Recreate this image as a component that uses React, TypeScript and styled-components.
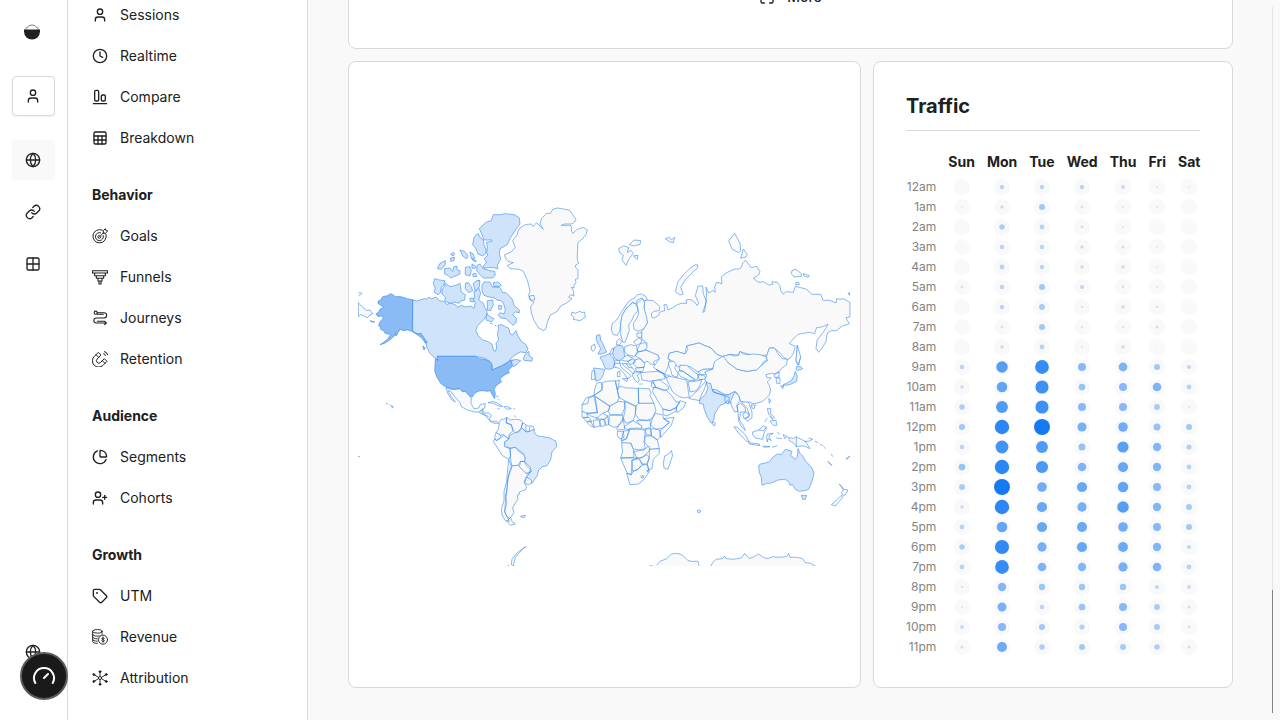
import React from 'react';
import styled, { createGlobalStyle } from 'styled-components';
import {
  User,
  Clock,
  AlignEndHorizontal,
  Sheet,
  Globe,
  Link as LinkIcon,
  Grid2X2,
  ChartPie,
  UserPlus,
  Tag,
  Maximize,
} from 'lucide-react';

const GlobalStyle = createGlobalStyle`
  * { box-sizing: border-box; }
  body {
    margin: 0;
    background: #f9f9f9;
    color: #202020;
    font-family: Inter, "Liberation Sans", sans-serif;
    font-size: 14px;
    line-height: 20px;
  }
`;

const Shell = styled.div`
  display: flex;
  height: 100vh;
  overflow: hidden;
`;

const Rail = styled.aside`
  display: flex;
  flex: none;
  flex-direction: column;
  width: 68px;
  padding: 20px 12px 48px;
  border-right: 1px solid #d9d9d9;
  background: #fff;
`;

const Logo = styled.a`
  display: flex;
  justify-content: center;
  align-items: center;
  height: 24px;
  margin-bottom: 32px;
  padding-right: 3px;
`;

const RailNav = styled.nav`
  display: flex;
  flex-direction: column;
  gap: 12px;
  margin-top: 24px;
`;

const RailButton = styled.button<{ $look?: 'outlined' | 'active' }>`
  display: flex;
  align-items: center;
  justify-content: center;
  width: 100%;
  height: 40px;
  padding: 0 1px 0 0;
  color: inherit;
  background: ${(p) => (p.$look === 'active' ? '#f9f9f9' : '#fff')};
  border: 1px solid ${(p) => (p.$look === 'outlined' ? '#d9d9d9' : 'transparent')};
  border-radius: ${(p) => (p.$look === 'outlined' ? '4px' : '0')};
  box-shadow: ${(p) => (p.$look === 'outlined' ? '0 1px 2px rgba(0, 0, 0, 0.06)' : 'none')};
`;

const RailFooter = styled.div`
  margin-top: auto;
`;

const Sidebar = styled.nav`
  display: flex;
  flex: none;
  flex-direction: column;
  gap: 36px;
  width: 240px;
  padding: 4px 24px;
  overflow: hidden;
  border-right: 1px solid #d9d9d9;
  background: #fff;
`;

const NavGroup = styled.section`
  display: flex;
  flex-direction: column;
  gap: 20px;
`;

const NavHeading = styled.h2`
  margin: 0;
  font-size: 14px;
  font-weight: 700;
  line-height: 21px;
`;

const NavLink = styled.a`
  display: flex;
  align-items: center;
  gap: 12px;
  color: inherit;
  line-height: 21px;
  text-decoration: none;
`;

const Main = styled.main`
  display: flex;
  flex: 1;
  flex-direction: column;
  justify-content: flex-end;
  gap: 12px;
  min-width: 0;
  padding: 0 39px 32px 40px;
`;

const ScrollTrack = styled.div`
  display: flex;
  flex: none;
  flex-direction: column;
  justify-content: flex-end;
  width: 8px;
  padding: 7px 7px 7px 0;
`;

const ScrollLine = styled.div`
  display: flex;
  flex: 1;
  align-items: flex-end;
  background: #e4e4e4;
`;

const ScrollThumb = styled.div`
  width: 1px;
  height: 123px;
  background: #838383;
`;

const Card = styled.section`
  flex: none;
  padding: 32px;
  border: 1px solid #d9d9d9;
  border-radius: 8px;
  background: #fff;
`;

const MoreCard = styled(Card)`
  display: flex;
  justify-content: center;
  padding-bottom: 41px;
`;

const MoreButton = styled.button`
  display: flex;
  align-items: center;
  gap: 12px;
  padding: 0;
  border: 0;
  color: inherit;
  background: none;
  font: inherit;
  font-weight: 500;
`;

const Columns = styled.div`
  display: flex;
  gap: 12px;
`;

const MapCard = styled(Card)`
  display: flex;
  flex: 1;
  align-items: center;
  min-width: 0;
  padding: 0;
`;

const TrafficCard = styled(Card)`
  width: 360px;
  padding-bottom: 28px;
`;

const CardTitle = styled.h2`
  margin: 0 0 21px;
  padding-bottom: 12px;
  border-bottom: 1px solid #d9d9d9;
  font-size: 20px;
  font-weight: 700;
  line-height: 24px;
`;

const Heatmap = styled.table`
  width: 100%;
  border-collapse: collapse;
`;

const DayHead = styled.th`
  padding: 0 0 7px 12px;
  font-size: 14px;
  font-weight: 700;
  line-height: 20px;
  text-align: center;
`;

const HourHead = styled.th`
  padding: 0 0 4px;
  color: #838383;
  font-size: 12px;
  font-weight: 400;
  line-height: 16px;
  text-align: right;
`;

const Cell = styled.td`
  padding: 0 0 4px 12px;
`;

const Bubble = styled.div`
  display: flex;
  align-items: center;
  justify-content: center;
  width: 16px;
  height: 16px;
  margin: 0 auto;
  border-radius: 50%;
  background: #f9f9f9;
`;

const Dot = styled.div`
  width: 16px;
  height: 16px;
  border-radius: 50%;
  background: #147af3;
`;

const SpeedButton = styled.button`
  position: fixed;
  bottom: 20px;
  left: 20px;
  display: flex;
  align-items: center;
  justify-content: center;
  width: 48px;
  height: 48px;
  padding: 0;
  border: 2px solid #5c5c5c;
  border-radius: 50%;
  color: #fff;
  background: #1a1a1a;
`;

const MapSvg = styled.svg`
  display: block;
  width: 100%;
  height: auto;
`;

type GlyphProps = { children: React.ReactNode; width?: number };

const Glyph = ({ children, width = 1.3 }: GlyphProps) => (
  <svg
    width="16"
    height="16"
    viewBox="0 0 24 24"
    fill="none"
    stroke="currentColor"
    strokeWidth={width}
    strokeLinecap="round"
    strokeLinejoin="round"
    aria-hidden="true"
  >
    {children}
  </svg>
);

const GoalIcon = () => (
  <Glyph width={1.5}>
    <path d="M15.500 3.200A10 10 0 1 0 21 9.500" />
    <path d="M13 7.200A6 6 0 1 0 17 11.500" />
    <path d="M11 10.800a2.300 2.300 0 1 0 2.500 2.400" />
    <path d="M11 13.500l7-7M17 7.500V4l3-3 .8 2.700L23.500 4.500l-3 3Z" />
  </Glyph>
);

const FunnelIcon = () => (
  <Glyph width={1.6}>
    <path d="M.8 2.500h22.400v3.500H.8ZM4 6v4h16V6M6.500 10v4h11v-4M9 14v4h6v-4M10.500 18v4.500h3V18" />
  </Glyph>
);

const JourneyIcon = () => (
  <Glyph width={1.6}>
    <circle cx="5.500" cy="4" r="2.300" />
    <path d="M8 4h10a4 4 0 0 1 0 8H6.500a3.700 3.700 0 0 0 0 7.500H21M19 17l2.500 2.500L19 22M8 6.500h9M8 17h11" />
  </Glyph>
);

const MagnetIcon = () => (
  <Glyph width={1.5}>
    <path d="M9 2.500 3.500 8A9.300 9.300 0 0 0 16.500 21.500l6-6-4-4-5.700 5.700A3.500 3.500 0 0 1 7.800 12L13 6.500ZM6 5.500l4 4M15.500 14.500l4 4" />
    <path d="M18.500.8a6 6 0 0 1 5 5M17.500 4a3 3 0 0 1 2.700 2.700" />
  </Glyph>
);

const RevenueIcon = () => (
  <Glyph width={1.4}>
    <ellipse cx="8" cy="3.500" rx="7" ry="2.700" />
    <path d="M1 3.500V19c0 1.500 3.200 2.600 7 2.600M15 3.500v4M1 8c0 1.500 3 2.700 7 2.700l3-.3M1 12c0 1.500 3 2.700 7 2.700M1 16c0 1.300 3 2.300 7 2.300" />
    <circle cx="16.500" cy="16" r="6.800" />
    <path d="M18.500 14c-.4-1-3.600-1.200-3.800.3-.2 1.800 3.800 1.400 3.800 3.300 0 1.600-3.500 1.500-4 .2M16.500 12v8" />
  </Glyph>
);

const AttributionIcon = () => (
  <Glyph width={1.4}>
    <circle cx="12" cy="12" r="2.300" />
    <path d="M12 9.500V4M12 14.500V20M9.800 11 4 7.500M14.200 11 20 7.500M9.800 13 4 16.500M14.200 13l5.800 3.500" />
    <g fill="currentColor">
      <circle cx="12" cy="2.500" r="1.400" />
      <circle cx="12" cy="21.500" r="1.400" />
      <circle cx="2.700" cy="6.800" r="1.400" />
      <circle cx="21.300" cy="6.800" r="1.400" />
      <circle cx="2.700" cy="17.200" r="1.400" />
      <circle cx="21.300" cy="17.200" r="1.400" />
    </g>
  </Glyph>
);

type NavItem = { label: string; icon: React.ReactNode };
type NavSection = { title?: string; items: NavItem[] };

const sections: NavSection[] = [
  {
    items: [
      { label: 'Sessions', icon: <User size={16} /> },
      { label: 'Realtime', icon: <Clock size={16} /> },
      { label: 'Compare', icon: <AlignEndHorizontal size={16} /> },
      { label: 'Breakdown', icon: <Sheet size={16} /> },
    ],
  },
  {
    title: 'Behavior',
    items: [
      { label: 'Goals', icon: <GoalIcon /> },
      { label: 'Funnels', icon: <FunnelIcon /> },
      { label: 'Journeys', icon: <JourneyIcon /> },
      { label: 'Retention', icon: <MagnetIcon /> },
    ],
  },
  {
    title: 'Audience',
    items: [
      { label: 'Segments', icon: <ChartPie size={16} /> },
      { label: 'Cohorts', icon: <UserPlus size={16} /> },
    ],
  },
  {
    title: 'Growth',
    items: [
      { label: 'UTM', icon: <Tag size={16} /> },
      { label: 'Revenue', icon: <RevenueIcon /> },
      { label: 'Attribution', icon: <AttributionIcon /> },
    ],
  },
];

const days = ['Sun', 'Mon', 'Tue', 'Wed', 'Thu', 'Fri', 'Sat'];

// Share of the busiest hour, in percent, Sunday to Saturday.
const traffic: [string, number[]][] = [
  ['12am', [8, 28, 28, 28, 24, 14, 12]],
  ['1am', [12, 22, 38, 18, 14, 14, 8]],
  ['2am', [0, 34, 30, 18, 14, 6, 0]],
  ['3am', [8, 28, 28, 22, 20, 12, 8]],
  ['4am', [8, 30, 28, 22, 22, 12, 0]],
  ['5am', [18, 28, 38, 26, 18, 14, 0]],
  ['6am', [8, 28, 36, 16, 22, 16, 0]],
  ['7am', [0, 18, 38, 16, 16, 20, 8]],
  ['8am', [4, 22, 30, 14, 22, 10, 8]],
  ['9am', [28, 72, 86, 50, 55, 38, 26]],
  ['10am', [22, 66, 82, 42, 50, 54, 30]],
  ['11am', [34, 74, 82, 50, 50, 36, 14]],
  ['12pm', [38, 90, 100, 57, 60, 44, 38]],
  ['1pm', [28, 80, 74, 44, 70, 52, 32]],
  ['2pm', [42, 90, 76, 54, 64, 52, 30]],
  ['3pm', [36, 100, 60, 64, 66, 50, 30]],
  ['4pm', [22, 90, 64, 58, 72, 52, 37]],
  ['5pm', [30, 66, 64, 63, 60, 50, 38]],
  ['6pm', [34, 88, 58, 64, 62, 52, 26]],
  ['7pm', [30, 86, 54, 52, 58, 54, 30]],
  ['8pm', [16, 52, 40, 40, 40, 26, 24]],
  ['9pm', [14, 56, 28, 42, 50, 36, 20]],
  ['10pm', [24, 50, 38, 32, 50, 37, 18]],
  ['11pm', [20, 62, 34, 38, 37, 34, 20]],
];

const tones = {
  none: '#f9f9f9',
  faint: '#dce9fb',
  low: '#d4e6fb',
  mid: '#cfe3fb',
  high: '#8bbbf5',
  sea: '#ffffff',
};

type Region = { x: number; y: number; shapes: [keyof typeof tones, string][] };

const regions: Region[] = [
  // North America
  {
    x: 0,
    y: 0,
    shapes: [
      ['mid', 'M188 299 200 303 210 300 222 296 230 297 238 291 244 297 256 292 262 294 268 302 280 304 292 314 300 308 316 314 322 322 334 316 345 321 362 318 372 325 376 308 370 300 374 290 372 276 380 262 378 246 388 240 386 262 392 280 386 300 400 310 404 322 410 330 412 344 400 360 382 378 378 392 384 406 398 420 412 424 426 432 430 450 436 454 440 444 438 430 446 420 442 402 446 386 444 376 456 374 466 380 476 384 480 400 488 405 498 392 504 408 514 424 528 434 534 446 528 458 512 456 500 462 488 470 478 482 490 480 484 490 470 488 456 498 440 504 428 512 424 488 414 480 400 474 376 469 262 469 262 480 250 470 240 460 232 446 228 432 216 412 204 402 188 394Z'],
      ['high', 'M122 281 112 287 98 290 92 300 84 304 84 310 95 318 101 323 90 327 88 334 78 342 84 350 92 348 100 352 97 358 88 368 86 378 92 380 92 388 101 392 104 398 110 402 118 402 122 404 112 418 102 426 90 434 104 430 122 418 133 408 134 400 140 398 146 396 150 388 160 392 172 390 187 394 200 402 213 400 221 412 232 428 226 428 216 414 204 406 187 394 188 299 172 296 160 292 146 289 138 291 130 285Z'],
      ['high', 'M256 476 264 482 262 469 376 469 388 476 404 478 418 484 426 494 426 510 446 502 458 496 470 490 478 482 488 490 486 500 474 512 478 518 462 526 450 536 454 546 440 556 432 568 436 580 434 596 424 580 422 572 412 574 396 572 384 574 374 580 366 592 356 586 346 574 338 576 328 566 308 568 286 560 272 550 260 530 254 512Z'],
      ['mid', 'M484 482 498 478 512 482 500 494 490 500 486 492ZM520 478 524 466 536 454 538 468 548 474 545 484 534 482 522 481Z'],
      ['mid', 'M466 41 448 44 430 44 424 62 410 66 398 76 388 86 396 104 402 120 426 120 424 125 410 126 412 142 410 158 414 166 402 176 410 186 400 198 402 205 420 202 434 204 444 206 442 196 452 178 448 160 450 146 472 134 482 112 496 92 502 82 510 72 508 54 494 44Z'],
      ['mid', 'M384 100 372 112 368 134 378 146 384 162 398 168 408 160 408 148 402 134 400 120 390 112Z'],
      ['mid', 'M381 196 390 192 400 206 420 212 434 214 436 226 428 234 400 234 388 222 380 212ZM330 150 344 154 354 168 350 176 338 168ZM360 156 370 162 374 176 364 176ZM366 178 380 182 376 186ZM366 192 378 200 374 206 366 204ZM368 222 378 220 380 230 370 230ZM346 202 360 200 364 212 360 228 346 224ZM306 158 314 160 310 168 302 164ZM302 174 314 172 312 182 302 184ZM262 206 270 190 286 182 286 194 274 208ZM284 206 300 204 308 214 312 200 320 198 322 210 330 212 330 222 312 230 302 234 294 226 284 222Z'],
      ['mid', 'M254 236 268 240 284 242 282 256 274 262 272 278 264 284 252 276 256 264 250 252ZM286 250 300 260 318 256 330 250 334 276 346 284 344 300 330 304 328 310 312 306 302 310 284 304 286 292 276 282 276 268 284 260ZM346 250 356 248 364 260 368 272 356 278 346 266ZM370 250 380 242 390 242 388 260 378 274 372 262ZM360 294 372 296 370 306 360 304Z'],
      ['mid', 'M396 256 402 246 420 246 428 262 444 258 452 266 458 278 468 278 480 290 488 300 492 316 508 330 508 338 496 336 488 344 500 356 498 368 490 376 478 366 468 356 452 354 444 346 450 338 462 342 466 330 460 308 452 302 440 300 434 294 414 290 402 286 396 272ZM430 248 444 246 454 256 444 262 432 260ZM412 302 428 300 430 314 422 332 412 330ZM410 342 420 350 432 356 424 366 408 360ZM446 316 456 318 454 328 446 328ZM420 370 428 372M436 374 438 380'],
      ['none', 'M25 308 34 318 50 332 60 330 68 342 58 346 52 354 38 346 30 344 25 350ZM26 277 36 280 30 286 26 284'],
      ['high', 'M60 362 74 366 64 365ZM136 402 144 400 138 408ZM218 438 226 444 222 450Z'],
    ],
  },
  // Greenland and Iceland
  {
    x: 360,
    y: 0,
    shapes: [
      ['none', 'M248 28 262 24 280 27 298 30 308 44 318 58 314 66 306 72 284 72 274 76 302 76 306 84 304 90 308 100 322 88 340 82 352 90 348 104 334 120 324 128 322 160 322 180 326 190 316 196 318 204 324 210 324 236 316 238 318 248 312 256 312 264 304 262 310 272 312 288 302 284 296 292 306 296 292 308 272 318 262 334 240 346 232 368 228 386 220 392 206 384 192 362 184 338 182 320 192 306 180 300 176 286 180 272 172 240 160 214 148 208 120 206 112 196 130 188 114 184 106 174 104 164 124 156 136 142 128 122 142 104 144 94 150 84 166 74 184 72 190 80 194 74 200 68 220 88 210 72 214 56 230 40 242 40ZM178 288 192 286 194 300 182 300Z'],
      ['none', 'M306 336 304 346 312 352 310 358 330 362 346 352 344 336 336 338 330 334 316 340Z'],
    ],
  },
  // Russia and the arctic islands
  {
    x: 0,
    y: 0,
    shapes: [
      ['none', 'M886 300 910 302 930 320 928 332 912 334 904 340 906 352 912 354 926 346 930 336 944 332 942 314 950 314 954 330 970 322 982 314 994 310 1010 310 1008 300 1020 298 1034 306 1042 317 1046 309 1036 287 1044 259 1058 257 1060 281 1070 305 1058 337 1064 335 1070 281 1068 261 1076 279 1090 271 1096 277 1094 261 1100 247 1116 251 1114 231 1128 219 1154 207 1166 207 1174 203 1178 189 1188 181 1198 195 1204 203 1220 199 1230 215 1226 225 1210 235 1226 247 1240 245 1256 255 1268 253 1266 245 1282 247 1290 257 1292 271 1300 283 1308 275 1330 277 1336 259 1368 267 1386 283 1412 283 1420 301 1440 301 1458 309 1460 297 1482 297 1500 307 1500 351 1488 353 1498 371 1476 379 1458 393 1446 391 1432 399 1428 425 1416 445 1406 457 1398 445 1402 419 1420 397 1434 373 1416 381 1400 383 1394 401 1378 397 1344 403 1330 417 1318 431 1336 439 1330 461 1320 475 1312 479 1300 471 1282 451 1268 443 1258 445 1252 465 1230 467 1204 465 1170 455 1164 465 1138 463 1120 471 1100 463 1082 443 1064 437 1048 429 1010 438 1005 462 980 454 958 460 954 476 960 480 956 492 952 506 944 522 918 508 910 502 928 476 924 466 900 456 886 448 892 430 876 418 874 394 882 386 892 368 882 330 884 306Z'],
      ['none', 'M1044 195 1036 194 1020 205 1000 225 984 245 976 275 990 285 1000 282 992 262 1006 240 1030 215 1042 205ZM806 146 820 138 836 142 832 158 842 150 850 160 838 176 828 196 816 180 820 166 810 160ZM838 134 852 120 872 122 870 134 850 138ZM850 168 864 166 862 178ZM946 116 958 112 964 120 974 112 970 128 960 126Z'],
      ['none', 'M954 476 958 460 980 454 1005 462 1014 448 1010 438 1048 429 1064 437 1082 443 1100 463 1120 471 1112 490 1094 492 1088 506 1060 508 1044 516 1020 500 992 496 984 502 976 492 968 484Z'],
      ['none', 'M990 496 1010 496 1030 514 1048 526 1040 540 1022 530 1000 514 988 512ZM988 512 1000 514 1022 530 1036 542 1014 540 990 528 984 518ZM1044 516 1060 508 1088 508 1078 522 1054 526ZM1042 524 1060 524 1070 536 1048 540ZM946 528 964 530 982 534 1010 540 1014 566 1018 592 1000 594 984 588 968 576 958 556ZM1014 544 1036 544 1056 538 1050 556 1040 572 1020 576ZM1018 594 1042 572 1056 556 1072 540 1064 566 1050 594 1050 602 1018 596Z'],
      ['sea', 'M956 486 972 484 978 494 974 504 984 520 982 532 966 526 962 508 956 496Z'],
    ],
  },
  {
    x: 1020,
    y: 75,
    shapes: [
      ['none', 'M134 25 116 48 126 72 146 83 152 76 150 54ZM160 72 172 88 168 96 152 100ZM306 136 318 133 334 146 334 154 312 156 304 146ZM340 146 358 152 354 157 342 153ZM318 172 326 172 328 179 316 179ZM474 206 479 202 478 211ZM322 362 326 390 332 396 326 420 318 410Z'],
    ],
  },
  // Europe
  {
    x: 660,
    y: 240,
    shapes: [
      ['none', 'M126 132 140 120 152 100 166 78 178 62 196 52 202 44 214 42 226 48 232 58 224 62 214 54 202 60 198 72 188 66 178 78 168 86 156 108 152 132 150 150 142 166 130 164 124 150Z'],
      ['none', 'M188 68 200 74 204 92 192 106 186 120 176 134 178 152 170 174 164 188 158 186 152 164 152 132 156 108 168 86ZM200 72 216 56 224 66 222 84 230 112 232 128 222 146 204 154 192 148 190 130 200 116 206 100 204 86Z'],
      ['mid', 'M80 166 90 164 92 180 98 190 104 204 110 216 96 222 84 222 92 206 84 192 78 178Z'],
      ['none', 'M64 198 74 192 76 206 70 214 64 210ZM66 272 74 272 76 298 64 298ZM140 184 148 176 156 184 148 196 140 194ZM118 222 128 204 132 206 130 222ZM164 200 182 194 200 198 202 216 194 230 172 224 164 216ZM200 160 216 158 214 174 202 170ZM190 186 206 174 216 180 212 190 200 196ZM202 208 212 190 226 188 232 200 224 212 204 216ZM196 228 204 216 226 210 242 216 264 226 268 236 250 246 254 254 240 252 234 244 222 248 214 238ZM194 240 210 236 224 250 222 262 204 264 190 252ZM196 264 222 262 218 274 200 276ZM150 236 172 226 188 234 176 244 156 242ZM172 244 192 236 196 246 182 254ZM130 244 148 240 150 250 134 252ZM156 250 176 252 186 262 194 272 190 282 178 270 162 258ZM168 248 176 262 188 264M186 284 196 276 214 276 202 286 208 300 204 308 196 302ZM206 312 218 312M212 278 234 276 262 274 280 280 286 296 266 300 240 304 216 300ZM258 268 284 284 298 286 292 294 280 280ZM244 310 252 308'],
      ['none', 'M134 250 152 250 152 260 166 272 184 288 180 292 172 296 162 280 146 264 134 262ZM158 296 174 296 170 304ZM142 276 150 274 150 290 142 290Z'],
      ['low', 'M90 232 106 226 118 222 130 234 134 246 130 264 118 268 106 266 98 246Z'],
      ['mid', 'M132 204 142 196 158 198 162 214 164 230 150 242 136 238 128 222Z'],
      ['faint', 'M70 264 104 268 100 284 92 298 78 304 76 292 74 272Z'],
    ],
  },
  // Central and South America
  {
    x: 0,
    y: 450,
    shapes: [
      ['none', 'M288 113 300 117 316 119 328 116 338 126 346 124 356 136 364 144 363 160 372 176 386 174 392 163 406 161 404 174 396 178 388 186 374 186 352 180 334 170 330 158 316 142 302 124 294 122 302 138 316 156 306 150 294 132Z'],
      ['none', 'M388 188 398 178 402 190 416 188 424 196 418 208 426 214 440 214 446 220 432 220 420 214 408 198ZM398 178 396 190 416 200M414 158 428 154 444 160 458 170 446 168 430 160ZM462 170 474 170 484 176 470 178ZM438 138 446 140M444 148 448 150M442 175 450 178M490 176 495 177M494 196 497 202'],
      ['none', 'M470 202 462 208 454 208 448 216 446 236 438 248 450 256 462 254 476 268 478 252 490 242 484 224 468 218ZM470 202 480 210 496 208 512 210 518 218 514 232 506 244 496 248 488 240 484 224 470 220ZM518 218 534 228 548 228 554 240 544 244 528 244 520 238 514 232ZM528 226 528 242M540 230 538 244'],
      ['none', 'M438 248 434 262 438 272 452 262 450 254ZM434 266 430 274 444 296 456 316 476 328 482 316 480 296 466 290 464 276 476 268 462 256 452 264 440 272ZM480 296 496 292 508 306 524 316 526 334 512 334 504 346 486 348 482 330ZM512 334 524 336 530 348 542 358 538 368 526 370 508 350Z'],
      ['faint', 'M476 268 464 276 464 290 480 294 496 292 506 300 520 310 526 324 524 336 540 350 544 364 530 380 548 398 562 376 566 360 578 350 590 348 602 330 606 306 620 290 618 274 600 264 578 260 564 258 556 252 550 238 540 244 528 246 516 234 506 246 494 248 480 256Z'],
      ['none', 'M486 348 504 346 520 362 530 372 542 364 528 382 522 396 530 410 526 420 508 426 508 434 502 436 504 448 494 462 488 474 492 488 484 500 478 506 470 498 464 484 470 460 466 440 472 410 474 384 482 362ZM530 382 544 390 546 400 534 404 524 398ZM476 328 484 350 478 366 472 396 470 430 466 458 464 486 472 502 478 514 466 512 456 494 454 478 462 452 462 424 470 394 474 350ZM470 514 482 502 486 514 496 522 482 526ZM512 498 526 496 524 502 514 502ZM528 590 518 596 508 608 496 622 490 648 484 644 486 628 500 610 516 598ZM472 648 477 646'],
      ['high', 'M108 160 114 162M118 164 122 165M124 167 130 171 126 172ZM24 320 30 320'],
    ],
  },
  // Africa and the Middle East
  {
    x: 660,
    y: 510,
    shapes: [
      ['none', 'M248 32 270 30 296 50 296 58 280 62 258 52ZM246 34 258 52 250 54 244 48ZM250 52 264 54 290 62 306 78 318 96 330 96 320 112 300 122 278 116 262 90 248 66ZM278 118 300 122 320 112 318 124 290 138 280 134ZM330 92 348 98 340 114 322 128 318 112Z'],
      ['none', 'M205 54 222 56 238 56 244 72 240 76 252 100 206 100ZM142 60 150 48 168 54 186 54 205 56 206 104 198 108 164 92 146 82ZM136 34 148 30 146 46 142 60ZM72 76 96 60 94 40 108 34 136 32 142 60 148 84 140 98 120 108 80 82ZM72 76 74 58 80 40 92 36 98 44 96 60ZM36 104 48 84 72 76 54 104Z'],
      ['none', 'M36 104 54 100 56 84 72 78 82 128 48 130 36 124ZM76 80 120 110 116 122 98 130 88 146 74 142 62 138 50 130 82 128ZM120 108 146 94 164 96 164 114 156 134 120 134 114 124ZM164 94 198 110 196 132 190 152 168 160 160 144 166 116ZM206 100 252 100 258 122 246 146 232 152 206 148 196 132 198 108ZM200 152 240 150 242 172 220 178ZM246 148 256 130 276 134 282 146 298 156 280 174 258 178 242 166ZM280 146 312 142 304 166 272 202 270 182 298 158ZM242 176 262 178 270 182 270 202 262 210 244 196ZM226 178 242 176 244 196 228 194ZM226 198 244 198 262 210 268 236 240 238 224 216Z'],
      ['none', 'M178 176 202 174 226 182 222 216 226 236 206 240 188 236 184 220 160 220 154 214 170 206 176 188ZM162 170 190 152 216 168 212 178 170 178ZM140 176 150 160 160 144 164 178 142 180ZM118 136 158 136 158 156 142 170 132 172 116 164ZM36 124 50 130 54 142 36 142ZM40 144 58 142 66 156 50 154ZM50 156 60 152 72 172 62 168ZM70 150 88 150 90 168 72 172ZM90 150 102 148 106 166 92 170ZM104 148 114 140 116 164 108 166ZM78 146 98 130 114 138 102 148ZM142 184 160 184 162 202 150 208 142 198ZM160 184 178 180 168 206 154 212Z'],
      ['none', 'M154 218 182 220 190 238 192 262 152 264 158 244ZM192 244 222 240 236 228 240 240 218 262 200 264ZM238 238 268 236 268 250 250 268 246 296 236 300 232 284 238 262ZM208 266 232 254 238 264 230 282 216 282ZM152 264 204 264 186 270 184 314 172 310 162 288ZM186 272 206 266 218 284 204 298 188 304ZM170 310 184 314 190 304 204 298 216 284 232 284 238 304 224 326 206 342 180 344ZM214 318 220 316 220 324 213 322ZM230 302 235 301 234 307ZM284 258 296 252 304 242 308 256 294 298 282 294 280 280Z'],
    ],
  },
  // Asia, Oceania and Antarctica
  {
    x: 990,
    y: 420,
    shapes: [
      ['none', 'M130 48 104 64 98 88 74 96 80 106 74 120 90 138 98 150 120 164 146 164 164 156 176 166 182 184 196 188 208 186 222 192 248 184 268 166 272 150 268 136 262 126 274 114 260 112 258 104 274 100 284 102 298 94 304 86 320 74 322 58 306 56 292 38 284 24 268 24 262 42 258 50 262 62 244 76 230 90 200 94 172 88 144 68 140 56Z'],
      ['none', 'M130 48 150 44 162 48 176 46 180 34 190 42 204 44 220 42 240 44 258 50 262 62 252 64 244 76 230 90 200 94 172 88 144 68Z'],
      ['low', 'M350 80 362 80 368 86 352 92 348 88ZM346 94 352 108 350 124 334 132 318 136 310 134 334 122 342 108ZM302 138 312 136 308 146Z'],
      ['none', 'M282 104 298 96 296 112 284 112ZM288 114 300 114 300 130 290 130ZM352 16 356 30 362 50 354 76 348 60ZM98 244 106 250 104 258 98 254Z'],
      ['low', 'M78 128 92 130 96 148 100 156 132 166 146 164 164 154 172 160 158 176 152 190 142 182 136 190 120 196 104 222 102 240 94 250 82 232 72 206 70 192 58 190 60 178 76 164 84 144ZM98 148 110 150 132 162 132 166 100 156ZM134 168 148 172 146 192 136 188Z'],
      ['none', 'M164 156 176 166 180 182 170 196 174 214 164 216 154 196 152 184ZM172 196 182 190 196 204 196 216 182 216 178 240 190 256 196 272 186 262 176 244ZM184 186 204 186 208 192 216 216 216 234 202 244 196 236 208 226 202 206ZM196 216 208 222 206 232 192 236 188 222ZM214 194 226 196 222 206 216 204ZM266 176 272 180 268 190Z'],
      ['none', 'M162 260 172 262 196 284 208 306 200 304 178 282ZM206 308 238 312 240 317 208 312ZM248 318 270 320 252 322ZM276 322 292 317M218 276 236 270 250 258 260 262 252 280 248 298 226 294 218 284ZM236 270 250 272 258 262M262 282 280 280 266 288 274 302 264 296 262 306 260 292ZM288 294 306 296M294 276 298 284M262 206 272 206 272 222 284 232 278 236 266 222ZM270 244 288 240 290 256 280 256ZM254 246 262 234M270 228 280 242M310 284 322 290 314 296ZM326 292 340 296 348 290 368 300 378 306 390 326 372 318 362 318 350 320 340 308 328 302ZM349 291V320M386 294 398 298 386 304 374 304M404 304 414 308M420 312 430 318M432 321 436 326M454 342 458 350M444 364 456 376 450 372ZM498 356 510 348 506 352 502 358Z'],
      ['none', 'M478 432 486 440 492 448 504 450 498 462 490 468 484 458 490 450ZM484 466 488 472 478 484 466 498 454 494 468 482ZM52 512 60 510 62 516 54 518Z'],
      ['low', 'M236 376 242 372 268 366 278 352 292 342 304 344 316 328 336 334 332 346 346 358 352 350 354 326 360 340 370 350 376 362 396 384 402 400 396 424 386 448 374 452 358 454 346 448 338 434 330 436 326 424 314 418 294 420 272 430 260 430 246 436 244 412 238 398ZM364 466 380 466 376 478 368 478Z'],
      ['none', 'M90 682 98 668 108 658 128 656 134 648 138 656 160 658 184 654 194 640 208 656 222 650 236 642 250 652 262 656 280 650 294 652 320 650 326 640 330 652 352 652 368 656 376 668 392 670 412 682M-92 678-82 677M-70 676-60 664-40 656-26 642-14 640 0 642 10 648 24 662 34 664 54 664 58 680'],
    ],
  },
];

const WorldMap = () => (
  <MapSvg viewBox="349 183 511 383" role="img" aria-label="Visitors by country">
    <clipPath id="world">
      <rect x="358" y="183" width="494" height="383" />
    </clipPath>
    <g clipPath="url(#world)">
      {regions.map((region, i) => (
        <g key={i} transform={`translate(${350 + region.x / 3} ${200 + region.y / 3}) scale(0.3333)`}>
          {region.shapes.map(([tone, d], n) => (
            <path key={n} d={d} fill={tones[tone]} stroke="#2680eb" strokeOpacity="0.55" strokeWidth="3" strokeLinejoin="round" />
          ))}
        </g>
      ))}
    </g>
  </MapSvg>
);

export default function App() {
  return (
    <>
      <GlobalStyle />
      <Shell>
        <Rail>
          <Logo href="#" aria-label="Home">
            <svg width="16" height="16" viewBox="0 0 16 16" aria-hidden="true">
              <circle cx="8" cy="7.500" r="6.500" fill="#fff" stroke="#202020" strokeWidth=".6" />
              <path d="M0 5.500h16v2a8 8 0 0 1-16 0Z" fill="#202020" />
            </svg>
          </Logo>
          <RailButton $look="outlined" aria-label="Account"><User size={16} /></RailButton>
          <RailNav>
            <RailButton $look="active" aria-label="Websites"><Globe size={16} /></RailButton>
            <RailButton aria-label="Links"><LinkIcon size={16} /></RailButton>
            <RailButton aria-label="Boards"><Grid2X2 size={16} /></RailButton>
          </RailNav>
          <RailFooter>
            <RailButton aria-label="Language"><Globe size={16} /></RailButton>
          </RailFooter>
        </Rail>
        <Sidebar>
          {sections.map((section, i) => (
            <NavGroup key={i}>
              {section.title && <NavHeading>{section.title}</NavHeading>}
              {section.items.map((item) => (
                <NavLink key={item.label} href="#">
                  {item.icon}
                  {item.label}
                </NavLink>
              ))}
            </NavGroup>
          ))}
        </Sidebar>
        <Main>
          <MoreCard>
            <MoreButton>
              <Maximize size={16} />
              More
            </MoreButton>
          </MoreCard>
          <Columns>
            <MapCard>
              <WorldMap />
            </MapCard>
            <TrafficCard>
              <CardTitle>Traffic</CardTitle>
              <Heatmap>
                <thead>
                  <tr>
                    <td />
                    {days.map((day) => (
                      <DayHead key={day} scope="col">{day}</DayHead>
                    ))}
                  </tr>
                </thead>
                <tbody>
                  {traffic.map(([hour, values]) => (
                    <tr key={hour}>
                      <HourHead scope="row">{hour}</HourHead>
                      {values.map((value, i) => (
                        <Cell key={days[i]}>
                          <Bubble>
                            <Dot style={{ transform: `scale(${value / 100})`, opacity: value / 100 }} />
                          </Bubble>
                        </Cell>
                      ))}
                    </tr>
                  ))}
                </tbody>
              </Heatmap>
            </TrafficCard>
          </Columns>
        </Main>
        <ScrollTrack>
          <ScrollLine>
            <ScrollThumb />
          </ScrollLine>
        </ScrollTrack>
      </Shell>
      <SpeedButton aria-label="Performance">
        <svg width="24" height="24" viewBox="0 0 24 24" fill="none" stroke="currentColor" strokeWidth="2" strokeLinecap="round" aria-hidden="true">
          <path d="M3.300 19a10 10 0 1 1 17.400 0M12 14l4-4" />
        </svg>
      </SpeedButton>
    </>
  );
}
